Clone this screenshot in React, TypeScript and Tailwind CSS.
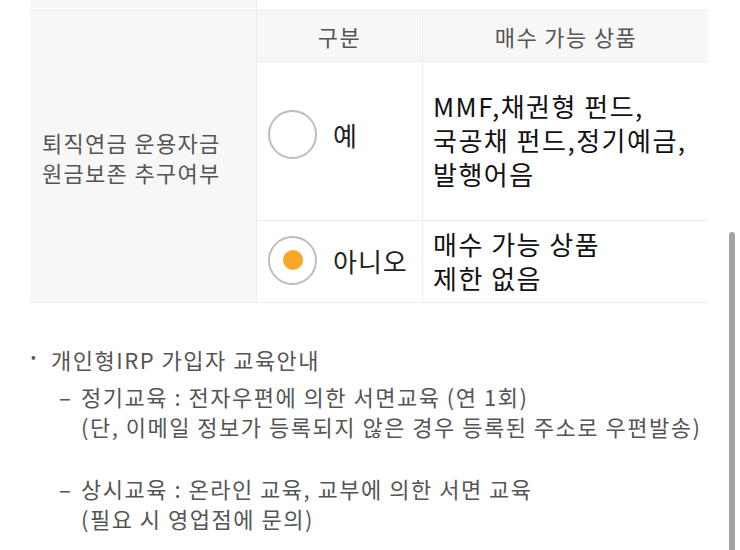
const FONT = { fontFamily: '"Noto Sans CJK KR", "Noto Sans", sans-serif' };

const ROWS = [
  {
    label: "예",
    checked: false,
    lines: ["MMF,채권형 펀드,", "국공채 펀드,정기예금,", "발행어음"],
    height: "h-[159px]",
    lift: "pb-[14px]",
  },
  {
    label: "아니오",
    checked: true,
    lines: ["매수 가능 상품", "제한 없음"],
    height: "h-[81px]",
    lift: "pb-[3px]",
  },
];

function Radio({ checked }: { checked: boolean }) {
  return (
    <span className="flex h-[49px] w-[49px] shrink-0 items-center justify-center rounded-full border-2 border-[#bdbdbd] bg-white">
      {checked && <span className="h-[20px] w-[20px] rounded-full bg-[#f9a825]" />}
    </span>
  );
}

export default function App() {
  return (
    <div className="relative h-[550px] w-[740px] overflow-hidden bg-white" style={FONT}>
      {/* 표 */}
      <div className="ml-[30px] w-[678px]">
        {/* 윗 행의 끝부분 */}
        <div className="flex h-[11px] border-b border-[#ececec]">
          <div className="w-[226px] bg-[#f7f7f7]" />
          <div className="flex-1 border-l border-[#ececec]" />
        </div>

        <div className="flex border-b border-[#ececec]">
          <div className="flex w-[226px] items-center bg-[#f7f7f7] pl-[12px] text-[22px] leading-[30px] tracking-[1.3px] text-[#555]">
            <p>
              퇴직연금 운용자금
              <br />
              원금보존 추구여부
            </p>
          </div>

          <div className="w-[452px] border-l border-[#ececec]">
            {/* 헤더 */}
            <div className="grid h-[51px] grid-cols-[165px_287px] border-b border-[#ececec] bg-[#f7f7f7] text-[22px] tracking-[1.4px] text-[#555]">
              <div className="flex items-center justify-center">구분</div>
              <div className="flex items-center justify-center border-l border-[#ececec]">
                매수 가능 상품
              </div>
            </div>

            {ROWS.map((row, i) => (
              <div
                key={row.label}
                className={`grid grid-cols-[165px_287px] ${row.height} ${
                  i < ROWS.length - 1 ? "border-b border-[#ececec]" : ""
                }`}
              >
                <div
                  className={`flex items-center gap-[16px] pl-[11px] text-[26px] tracking-[1px] text-[#222] ${row.lift}`}
                >
                  <Radio checked={row.checked} />
                  <span>{row.label}</span>
                </div>
                <div className="flex items-center border-l border-[#ececec] pl-[10px] pb-[2px] text-[26px] leading-[34px] tracking-[1.5px] text-[#111]">
                  <p>
                    {row.lines.map((l) => (
                      <span key={l} className="block">
                        {l}
                      </span>
                    ))}
                  </p>
                </div>
              </div>
            ))}
          </div>
        </div>
      </div>

      {/* 교육안내 */}
      <div className="mt-[41px] pl-[31px] text-[22px] leading-[30px] tracking-[1.5px] text-[#555]">
        <div className="flex">
          <span className="w-[20px] text-[14px] leading-[24px]">•</span>
          <span>개인형IRP 가입자 교육안내</span>
        </div>
        <div className="mt-[7px] flex">
          <span className="w-[50px] pl-[28px]">–</span>
          <p>
            정기교육 : 전자우편에 의한 서면교육 (연 1회)
            <br />
            (단, 이메일 정보가 등록되지 않은 경우 등록된 주소로 우편발송)
          </p>
        </div>
        <div className="mt-[32px] flex">
          <span className="w-[50px] pl-[28px]">–</span>
          <p>
            상시교육 : 온라인 교육, 교부에 의한 서면 교육
            <br />
            (필요 시 영업점에 문의)
          </p>
        </div>
      </div>

      {/* 스크롤바 */}
      <div className="absolute right-[5px] top-[232px] h-[330px] w-[6px] rounded-full bg-[#a3a3a3]" />
    </div>
  );
}
